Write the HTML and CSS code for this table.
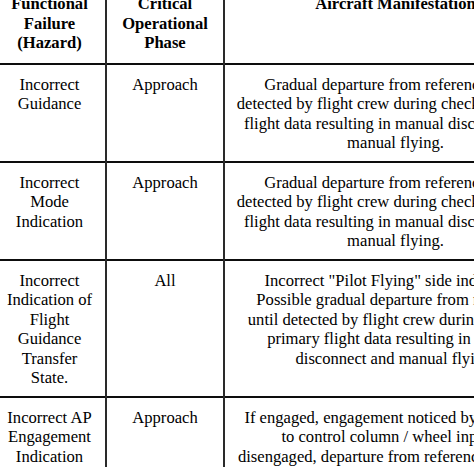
FILE: index.html
```html
<!DOCTYPE html>
<html lang="en">
<head>
<meta charset="utf-8">
<title>Functional Hazard Assessment</title>
<link rel="stylesheet" href="styles.css">
</head>
<body>
<div class="page">
<table class="fha">
  <colgroup>
    <col class="c-fail">
    <col class="c-phase">
    <col class="c-manif">
  </colgroup>
  <thead>
    <tr class="head">
      <th>Functional<br>Failure<br>(Hazard)</th>
      <th>Critical<br>Operational<br>Phase</th>
      <th>Aircraft Manifestation</th>
    </tr>
  </thead>
  <tbody>
    <tr>
      <td>Incorrect<br>Guidance</td>
      <td>Approach</td>
      <td class="manif">Gradual departure from reference value<br>detected by flight crew during check of primary<br>flight data resulting in manual disconnect and<br>manual flying.</td>
    </tr>
    <tr>
      <td>Incorrect<br>Mode<br>Indication</td>
      <td>Approach</td>
      <td class="manif">Gradual departure from reference value<br>detected by flight crew during check of primary<br>flight data resulting in manual disconnect and<br>manual flying.</td>
    </tr>
    <tr>
      <td>Incorrect<br>Indication of<br>Flight<br>Guidance<br>Transfer<br>State.</td>
      <td>All</td>
      <td class="manif">Incorrect "Pilot Flying" side indication.<br>Possible gradual departure from reference<br>until detected by flight crew during check of<br>primary flight data resulting in manual<br>disconnect and manual flying.</td>
    </tr>
    <tr>
      <td>Incorrect AP<br>Engagement<br>Indication</td>
      <td>Approach</td>
      <td class="manif">If engaged, engagement noticed by resistance<br>to control column / wheel input. If<br>disengaged, departure from reference path until<br>detected by flight crew.</td>
    </tr>
  </tbody>
</table>
</div>
</body>
</html>
```

FILE: styles.css
```css
html, body {
  margin: 0;
  padding: 0;
  background: #ffffff;
}

body {
  width: 474px;
  height: 467px;
  overflow: hidden;
}

.page {
  overflow: hidden;
  width: 474px;
  height: 467px;
}

.fha {
  border-collapse: collapse;
  table-layout: fixed;
  width: 574px;
  margin: -16px 0 0 -8px;
  font-family: "Liberation Serif", "Times New Roman", serif;
  font-size: 16.6px;
  line-height: 19.5px;
  color: #000000;
}

.c-fail { width: 113px; }
.c-phase { width: 118px; }
.c-manif { width: 343px; }

.fha th,
.fha td {
  text-align: center;
  vertical-align: top;
  padding: 10px 4px 8px;
  border-left: 2px solid #2a2a2a;
  border-right: 2px solid #2a2a2a;
  white-space: nowrap;
}

.fha th {
  font-weight: bold;
  padding-bottom: 10px;
}

.fha tr {
  border-bottom: 2px solid #0d0d0d;
}
```
